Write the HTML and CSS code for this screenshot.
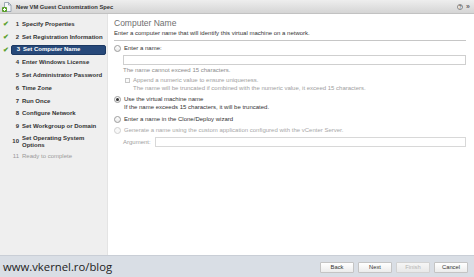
FILE: index.html
```html
<!DOCTYPE html>
<html lang="en">
<head>
    <meta charset="UTF-8">
    <title>New VM Guest Customization Spec</title>
    <link rel="stylesheet" href="styles.css">
</head>
<body>
    <div class="dialog">
        <!-- Title bar -->
        <div class="titlebar">
            <svg class="title-icon" width="10" height="10" viewBox="0 0 10 10">
                <path d="M2.5 0.5h4l2.5 2.5v6.5h-6.5z" fill="#f4f6f8" stroke="#8a97a6" stroke-width="0.8"/>
                <path d="M6.5 0.5v2.5h2.5" fill="none" stroke="#8a97a6" stroke-width="0.8"/>
                <rect x="0" y="5" width="5" height="5" rx="1" fill="#5aa02c"/>
                <path d="M2.5 6v3M1 7.5h3" stroke="#fff" stroke-width="1"/>
            </svg>
            <span>New VM Guest Customization Spec</span>
            <div class="title-tools">
                <span class="help">?</span>
                <span class="expand">&raquo;</span>
            </div>
        </div>

        <div class="main">
            <!-- Wizard steps -->
            <ul class="steps">
                <li class="step done"><span class="check">&#10004;</span><span class="label"><span class="num">1</span>Specify Properties</span></li>
                <li class="step done"><span class="check">&#10004;</span><span class="label"><span class="num">2</span>Set Registration Information</span></li>
                <li class="step done current"><span class="check">&#10004;</span><span class="label"><span class="num">3</span>Set Computer Name</span></li>
                <li class="step"><span class="check"></span><span class="label"><span class="num">4</span>Enter Windows License</span></li>
                <li class="step"><span class="check"></span><span class="label"><span class="num">5</span>Set Administrator Password</span></li>
                <li class="step"><span class="check"></span><span class="label"><span class="num">6</span>Time Zone</span></li>
                <li class="step"><span class="check"></span><span class="label"><span class="num">7</span>Run Once</span></li>
                <li class="step"><span class="check"></span><span class="label"><span class="num">8</span>Configure Network</span></li>
                <li class="step"><span class="check"></span><span class="label"><span class="num">9</span>Set Workgroup or Domain</span></li>
                <li class="step tall"><span class="check"></span><span class="label"><span class="num">10</span><span>Set Operating System<br>Options</span></span></li>
                <li class="step pending"><span class="check"></span><span class="label"><span class="num">11</span>Ready to complete</span></li>
            </ul>

            <!-- Page content -->
            <div class="content">
                <div class="page-head">
                    <h2>Computer Name</h2>
                    <p>Enter a computer name that will identify this virtual machine on a network.</p>
                </div>

                <div class="option first">
                    <span class="radio"></span>Enter a name:
                </div>
                <div class="field"></div>
                <div class="hint">The name cannot exceed 15 characters.</div>
                <div class="check-row">
                    <span class="box"></span>Append a numeric value to ensure uniqueness.
                </div>
                <div class="check-note">The name will be truncated if combined with the numeric value, it exceed 15 characters.</div>

                <div class="option selected">
                    <span class="radio"></span>Use the virtual machine name
                </div>
                <div class="note">If the name exceeds 15 characters, it will be truncated.</div>

                <div class="option spaced">
                    <span class="radio"></span>Enter a name in the Clone/Deploy wizard
                </div>
                <div class="option disabled">
                    <span class="radio"></span>Generate a name using the custom application configured with the vCenter Server.
                </div>
                <div class="arg-row">
                    <span>Argument:</span>
                    <div class="field"></div>
                </div>
            </div>
        </div>

        <!-- Footer -->
        <div class="footer">
            <span class="watermark">www.vkernel.ro/blog</span>
            <div class="buttons">
                <button>Back</button>
                <button>Next</button>
                <button disabled>Finish</button>
                <button>Cancel</button>
            </div>
        </div>
    </div>
</body>
</html>
```

FILE: styles.css
```css
* {
    box-sizing: border-box;
}

html, body {
    margin: 0;
}

body {
    font-family: "Liberation Sans", Arial, sans-serif;
    background: #fff;
}

.dialog {
    width: 474px;
    height: 277px;
    display: flex;
    flex-direction: column;
    overflow: hidden;
}

/* Title bar */
.titlebar {
    height: 14px;
    flex-shrink: 0;
    display: flex;
    align-items: center;
    gap: 4px;
    padding: 0 4px 0 2px;
    background: linear-gradient(#eeeeee, #d5d5d5);
    border-bottom: 1px solid #c2c2c2;
    font-size: 5.8px;
    font-weight: bold;
    color: #333;
}

.title-icon {
    display: block;
}

.title-tools {
    margin-left: auto;
    display: flex;
    align-items: center;
    gap: 3px;
}

.help {
    width: 6px;
    height: 6px;
    border-radius: 50%;
    border: 0.8px solid #888;
    background: #f4f4f4;
    font-size: 4.5px;
    line-height: 5px;
    text-align: center;
    color: #555;
}

.expand {
    font-size: 7px;
    color: #666;
    line-height: 6px;
}

/* Body */
.main {
    flex: 1;
    display: flex;
    min-height: 0;
}

/* Wizard steps */
.steps {
    width: 108px;
    flex-shrink: 0;
    margin: 0;
    padding: 4px 0 0;
    list-style: none;
    background: #efefef;
    border-right: 1px solid #e4e4e4;
}

.step {
    height: 12.8px;
    display: flex;
    align-items: center;
    font-size: 6px;
    font-weight: bold;
    color: #333;
}

.step.tall {
    height: 17px;
}

.step.pending {
    color: #9a9a9a;
    font-weight: normal;
}

.check {
    width: 11px;
    padding-left: 3px;
    color: #5aa02c;
    font-size: 6.5px;
}

.label {
    width: 95px;
    min-height: 9.5px;
    display: flex;
    align-items: center;
    gap: 3px;
    border-radius: 2px;
    line-height: 7px;
}

.num {
    width: 8px;
    text-align: right;
    flex-shrink: 0;
}

.step.current .label {
    background: #27497a;
    color: #fff;
    border: 1px solid #1c3963;
}

/* Content */
.content {
    flex: 1;
    padding: 4px 8px 0 6px;
    font-size: 6px;
    color: #333;
}

.page-head {
    border-bottom: 1px solid #c6c6c6;
    padding-bottom: 3px;
}

.page-head h2 {
    margin: 0;
    font-size: 8.5px;
    line-height: 11px;
    font-weight: normal;
    color: #6f6f6f;
}

.page-head p {
    margin: 0;
    line-height: 8px;
}

.option {
    display: flex;
    align-items: center;
    gap: 3px;
    line-height: 8px;
    margin-top: 3px;
}

.option.spaced {
    margin-top: 4px;
}

.option.disabled {
    color: #a8a8a8;
}

.radio {
    width: 7px;
    height: 7px;
    border-radius: 50%;
    border: 1px solid #9c9c9c;
    background: linear-gradient(#ffffff, #e8e8e8);
    flex-shrink: 0;
    display: flex;
    align-items: center;
    justify-content: center;
}

.option.selected .radio::after {
    content: "";
    width: 3px;
    height: 3px;
    border-radius: 50%;
    background: #333;
}

.option.disabled .radio {
    border-color: #d0d0d0;
    background: #f8f8f8;
}

.field {
    height: 9.5px;
    border: 1px solid #cfcfcf;
    background: #fff;
}

.content > .field {
    margin: 3px 0 0 9px;
}

.hint {
    margin: 1.5px 0 0 9px;
    line-height: 8px;
    color: #8c8c8c;
}

.check-row {
    display: flex;
    align-items: center;
    gap: 3px;
    margin: 2px 0 0 11px;
    line-height: 8px;
    color: #a0a0a0;
}

.box {
    width: 5px;
    height: 5px;
    border: 1px solid #c8c8c8;
    background: #fafafa;
}

.check-note {
    margin-left: 19px;
    line-height: 8px;
    color: #a0a0a0;
}

.note {
    margin-left: 10px;
    line-height: 8px;
}

.arg-row {
    display: flex;
    align-items: center;
    gap: 4px;
    margin: 3px 0 0 9px;
    color: #a0a0a0;
}

.arg-row span {
    width: 28px;
}

.arg-row .field {
    flex: 1;
    height: 10px;
    border-color: #d8d8d8;
}

/* Footer */
.footer {
    height: 22px;
    flex-shrink: 0;
    display: flex;
    align-items: center;
    justify-content: space-between;
    padding: 0 6px 0 3px;
    background: #d9dee5;
    border-top: 1px solid #c9ced6;
}

.watermark {
    font-family: "Open Sans", sans-serif;
    font-size: 11.3px;
    color: #222;
}

.buttons {
    display: flex;
    gap: 4px;
    padding-top: 1px;
}

.buttons button {
    width: 34px;
    height: 11px;
    padding: 0;
    font-family: "Liberation Sans", Arial, sans-serif;
    font-size: 5.8px;
    color: #333;
    background: linear-gradient(#ffffff, #ececec);
    border: 1px solid #c4c4c4;
    border-radius: 1px;
}

.buttons button:disabled {
    color: #b4b4b4;
    background: linear-gradient(#f6f6f6, #e8e8e8);
    border-color: #d2d2d2;
}
```
